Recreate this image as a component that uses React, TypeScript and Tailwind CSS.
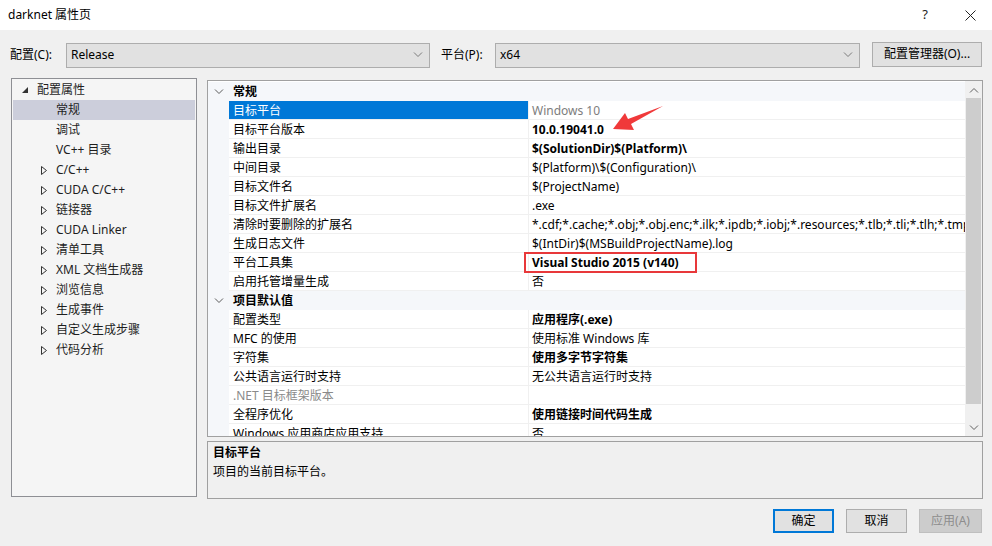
import React from 'react';

const font = "font-['Noto_Sans','Noto_Sans_CJK_SC',sans-serif]";

interface Prop {
  name: string;
  value: string;
  bold?: boolean;
  muted?: boolean;
  nameMuted?: boolean;
  selected?: boolean;
}

const general: Prop[] = [
  { name: '目标平台', value: 'Windows 10', muted: true, selected: true },
  { name: '目标平台版本', value: '10.0.19041.0', bold: true },
  { name: '输出目录', value: '$(SolutionDir)$(Platform)\\', bold: true },
  { name: '中间目录', value: '$(Platform)\\$(Configuration)\\' },
  { name: '目标文件名', value: '$(ProjectName)' },
  { name: '目标文件扩展名', value: '.exe' },
  { name: '清除时要删除的扩展名', value: '*.cdf;*.cache;*.obj;*.obj.enc;*.ilk;*.ipdb;*.iobj;*.resources;*.tlb;*.tli;*.tlh;*.tmp;*.rsp;*.pgc;*.pgd' },
  { name: '生成日志文件', value: '$(IntDir)$(MSBuildProjectName).log' },
  { name: '平台工具集', value: 'Visual Studio 2015 (v140)', bold: true },
  { name: '启用托管增量生成', value: '否' },
];

const defaults: Prop[] = [
  { name: '配置类型', value: '应用程序(.exe)', bold: true },
  { name: 'MFC 的使用', value: '使用标准 Windows 库' },
  { name: '字符集', value: '使用多字节字符集', bold: true },
  { name: '公共语言运行时支持', value: '无公共语言运行时支持' },
  { name: '.NET 目标框架版本', value: '', nameMuted: true },
  { name: '全程序优化', value: '使用链接时间代码生成', bold: true },
  { name: 'Windows 应用商店应用支持', value: '否' },
];

const treeChildren = [
  { label: '常规', leaf: true, selected: true },
  { label: '调试', leaf: true },
  { label: 'VC++ 目录', leaf: true },
  { label: 'C/C++' },
  { label: 'CUDA C/C++' },
  { label: '链接器' },
  { label: 'CUDA Linker' },
  { label: '清单工具' },
  { label: 'XML 文档生成器' },
  { label: '浏览信息' },
  { label: '生成事件' },
  { label: '自定义生成步骤' },
  { label: '代码分析' },
];

function Chevron({ up = false, className = '' }: { up?: boolean; className?: string }) {
  return (
    <svg width="10" height="6" viewBox="0 0 10 6" className={className}>
      <polyline
        points={up ? '1,5.5 5,1.5 9,5.5' : '1,0.5 5,4.5 9,0.5'}
        fill="none"
        stroke="currentColor"
        strokeWidth="1"
      />
    </svg>
  );
}

function Combo({ value, width }: { value: string; width: string }) {
  return (
    <div className={`flex h-[25px] items-center justify-between border border-[#adadad] bg-[#e1e1e1] pl-[4px] pr-[6px] ${width}`}>
      <span className="text-[12px] leading-[18px] text-black">{value}</span>
      <Chevron className="text-[#7a7a7a]" />
    </div>
  );
}

function Category({ title }: { title: string }) {
  return (
    <div className="flex h-[19px] shrink-0 items-center bg-[#f5f7fa]">
      <div className="flex w-[21px] justify-center pl-[1px]">
        <Chevron className="text-[#5b5b5b]" />
      </div>
      <span className="pl-[4px] text-[12px] font-bold leading-[18px] text-black">{title}</span>
    </div>
  );
}

function PropRow({ p }: { p: Prop }) {
  return (
    <div className="flex h-[19px] shrink-0">
      <div className="w-[21px] shrink-0 bg-[#f5f7fa]" />
      <div
        className={`w-[300px] shrink-0 border-r border-b border-[#f0f0f0] pl-[4px] pt-[1px] text-[12px] leading-[17px] whitespace-nowrap overflow-hidden ${
          p.selected ? 'bg-[#0078d7] text-white' : p.nameMuted ? 'text-[#8a8a8a]' : 'text-black'
        }`}
      >
        {p.name}
      </div>
      <div
        className={`min-w-0 flex-1 overflow-hidden border-b border-[#f0f0f0] pl-[3px] pt-[1px] text-[12px] leading-[17px] whitespace-nowrap ${
          p.bold ? 'font-bold' : ''
        } ${p.muted ? 'text-[#7d7d7d]' : 'text-black'}`}
      >
        {p.value}
      </div>
    </div>
  );
}

function Button({ label, primary, disabled }: { label: string; primary?: boolean; disabled?: boolean }) {
  return (
    <div
      className={`flex h-[24px] items-center justify-center text-[12px] ${
        primary
          ? 'w-[61px] border-2 border-[#0078d7] bg-[#e1e1e1] text-black'
          : disabled
          ? 'w-[63px] border border-[#bfbfbf] bg-[#cccccc] text-[#8d8d8d]'
          : 'w-[61px] border border-[#adadad] bg-[#e1e1e1] text-black'
      }`}
    >
      {label}
    </div>
  );
}

export default function App() {
  return (
    <div className={`relative flex h-[546px] w-[992px] flex-col overflow-hidden bg-[#f0f0f0] ${font}`}>
      {/* title bar */}
      <div className="flex h-[30px] shrink-0 items-center bg-white pl-[8px]">
        <span className="text-[12px] leading-[18px] text-black">darknet 属性页</span>
        <span className="ml-auto mr-[37px] text-[13px] text-[#222]">?</span>
        <svg width="11" height="11" viewBox="0 0 11 11" className="mr-[16px]">
          <path d="M0.5 0.5 L10.5 10.5 M10.5 0.5 L0.5 10.5" stroke="#222" strokeWidth="1" />
        </svg>
      </div>

      {/* configuration row */}
      <div className="flex h-[48px] shrink-0 items-center pl-[10px] pt-[2px] text-[12px] text-black">
        <span className="w-[56px]">配置(C):</span>
        <Combo value="Release" width="w-[364px]" />
        <span className="ml-[11px] w-[54px]">平台(P):</span>
        <Combo value="x64" width="w-[365px]" />
        <div className="ml-[12px] flex h-[25px] w-[110px] -translate-y-[1px] items-center justify-center border border-[#adadad] bg-[#e1e1e1]">
          配置管理器(O)...
        </div>
      </div>

      {/* main area */}
      <div className="flex h-[421px] shrink-0 pl-[11px]">
        {/* tree */}
        <div className="flex h-[419px] w-[186px] shrink-0 flex-col border border-[#8e8f94] bg-[#f5f5f5] p-[1px] text-[12px] text-[#1e1e1e]">
          <div className="flex h-[20px] shrink-0 items-center">
            <svg width="6" height="6" viewBox="0 0 6 6" className="ml-[9px]">
              <polygon points="6,0 6,6 0,6" fill="#333" />
            </svg>
            <span className="ml-[9px] leading-[18px]">配置属性</span>
          </div>
          {treeChildren.map((c) => (
            <div
              key={c.label}
              className={`flex h-[20px] shrink-0 items-center ${c.selected ? 'bg-[#cccedb]' : ''}`}
            >
              <div className="flex w-[43px] shrink-0 justify-end pr-[9px]">
                {!c.leaf && (
                  <svg width="6" height="9" viewBox="0 0 6 9">
                    <polygon points="0.5,0.5 5.5,4.5 0.5,8.5" fill="none" stroke="#333" strokeWidth="1" />
                  </svg>
                )}
              </div>
              <span className="leading-[18px]">{c.label}</span>
            </div>
          ))}
        </div>

        {/* right column */}
        <div className="ml-[10px] mt-[2px] flex w-[776px] shrink-0 flex-col gap-[4px]">
          <div className="flex h-[357px] shrink-0 border border-[#a0a0a0] bg-white">
            <div className="flex min-w-0 flex-1 flex-col overflow-hidden pt-[1px]">
              <Category title="常规" />
              {general.map((p) => (
                <PropRow key={p.name} p={p} />
              ))}
              <Category title="项目默认值" />
              {defaults.map((p) => (
                <PropRow key={p.name} p={p} />
              ))}
            </div>
            {/* scrollbar */}
            <div className="flex w-[17px] shrink-0 flex-col bg-[#f0f0f0]">
              <div className="flex h-[17px] shrink-0 items-center justify-center text-[#606060]">
                <Chevron up />
              </div>
              <div className="mx-[1px] h-[306px] shrink-0 bg-[#cdcdcd]" />
              <div className="flex-1" />
              <div className="flex h-[17px] shrink-0 items-center justify-center text-[#606060]">
                <Chevron />
              </div>
            </div>
          </div>

          {/* description */}
          <div className="h-[58px] shrink-0 border border-[#a0a0a0] bg-[#f0f0f0] px-[5px] pt-[1px] text-[12px] text-black">
            <div className="font-bold leading-[19px]">目标平台</div>
            <div className="leading-[19px]">项目的当前目标平台。</div>
          </div>
        </div>
      </div>

      {/* buttons */}
      <div className="mt-[10px] flex shrink-0 justify-end gap-[12px] pr-[10px]">
        <Button label="确定" primary />
        <Button label="取消" />
        <Button label="应用(A)" disabled />
      </div>

      {/* annotations drawn over the screenshot */}
      <div className="pointer-events-none absolute left-[524px] top-[252px] h-[21px] w-[173px] border-2 border-[#e8383a]" />
      <svg className="pointer-events-none absolute left-0 top-0" width="992" height="546" viewBox="0 0 992 546">
        <polygon points="613,129 625,113 628,119 663,106 631,124 634,130" fill="#f0393a" />
      </svg>
    </div>
  );
}
